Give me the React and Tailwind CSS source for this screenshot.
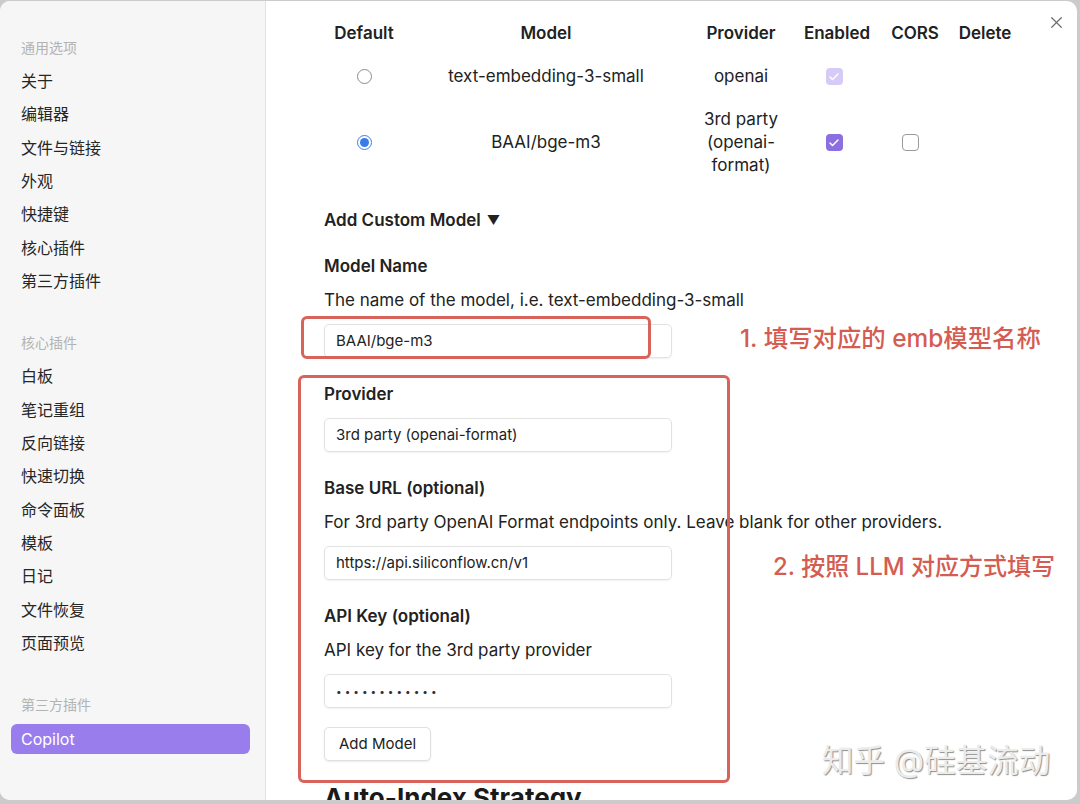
import { X, Check } from 'lucide-react';

const general = ['关于', '编辑器', '文件与链接', '外观', '快捷键', '核心插件', '第三方插件'];
const corePlugins = ['白板', '笔记重组', '反向链接', '快速切换', '命令面板', '模板', '日记', '文件恢复', '页面预览'];

function SideHeading({ children, className = '' }) {
	return <div className={`h-[20px] leading-[20px] px-[10px] text-[14px] text-[#b3b3b3] ${className}`}>{children}</div>;
}

function SideItem({ label }) {
	return <div className="h-[33.33px] leading-[33.33px] px-[10px] text-[16px] text-[#262626]">{label}</div>;
}

function Box({ checked, disabled }) {
	if (!checked) {
		return <span className="inline-block w-[17px] h-[17px] rounded-[4px] border border-[#9a9a9a] bg-white" />;
	}
	return (
		<span
			className={`inline-flex items-center justify-center w-[17px] h-[17px] rounded-[4px] ${
				disabled ? 'bg-[#d5cbf6]' : 'bg-[#8b6fe0]'
			}`}
		>
			<Check size={12} strokeWidth={3} className="text-white" />
		</span>
	);
}

function Radio({ on }) {
	if (on) {
		return (
			<span className="inline-flex items-center justify-center w-[15px] h-[15px] rounded-full border border-[#3f7fe6] bg-white">
				<span className="w-[9px] h-[9px] rounded-full bg-[#3b7be8]" />
			</span>
		);
	}
	return <span className="inline-block w-[15px] h-[15px] rounded-full border border-[#8c8c8c] bg-white" />;
}

function Field({ label, desc, value, first }) {
	return (
		<div className={first ? '' : 'mt-[24px]'}>
			{label && <div className="h-[24px] leading-[24px] text-[17px] font-semibold text-[#222]">{label}</div>}
			{desc && <div className="mt-[10px] h-[24px] leading-[24px] text-[17px] text-[#222] whitespace-nowrap">{desc}</div>}
			<div className="mt-[12px] w-[348px] h-[34px] flex items-center px-[11px] rounded-[5px] border border-[#e2e2e2] shadow-[0_1px_2px_rgba(0,0,0,0.06)] text-[15px] text-[#222]">
				{value}
			</div>
		</div>
	);
}

export default function App() {
	return (
		<div className="w-[1080px] h-[804px] bg-[#cbcbcb] pt-[1px] overflow-hidden font-['Inter','Noto_Sans_CJK_SC',sans-serif]">
			<div className="relative w-[1077px] h-[799px] rounded-[10px] overflow-hidden bg-white flex">
				{/* sidebar */}
				<div className="w-[266px] shrink-0 h-full bg-[#f6f6f6] border-r border-[#e2e2e2] pl-[11px] pr-[15px] pt-[37px]">
					<SideHeading>通用选项</SideHeading>
					<div className="mt-[7px]">
						{general.map((g) => (
							<SideItem key={g} label={g} />
						))}
					</div>
					<SideHeading className="mt-[35px]">核心插件</SideHeading>
					<div className="mt-[7px]">
						{corePlugins.map((g) => (
							<SideItem key={g} label={g} />
						))}
					</div>
					<SideHeading className="mt-[35px]">第三方插件</SideHeading>
					<div className="mt-[9px] h-[30px] leading-[30px] px-[10px] rounded-[6px] bg-[#9a7ded] text-white text-[16px]">
						Copilot
					</div>
				</div>

				{/* content */}
				<div className="flex-1 h-full overflow-hidden pl-[58px] pt-[20px]">
					<div className="ml-[-6px] grid grid-cols-[92px_272px_118px_74px_82px_58px] text-center text-[17px] text-[#222]">
						<div className="h-[24px] leading-[24px] font-semibold">Default</div>
						<div className="h-[24px] leading-[24px] font-semibold">Model</div>
						<div className="h-[24px] leading-[24px] font-semibold">Provider</div>
						<div className="h-[24px] leading-[24px] font-semibold whitespace-nowrap">Enabled</div>
						<div className="h-[24px] leading-[24px] font-semibold">CORS</div>
						<div className="h-[24px] leading-[24px] font-semibold">Delete</div>

						<div className="h-[63px] flex items-center justify-center">
							<Radio />
						</div>
						<div className="h-[63px] flex items-center justify-center">text-embedding-3-small</div>
						<div className="h-[63px] flex items-center justify-center">openai</div>
						<div className="h-[63px] flex items-center justify-center pr-[6px]">
							<Box checked disabled />
						</div>
						<div className="h-[63px]" />
						<div className="h-[63px]" />

						<div className="h-[69px] flex items-center justify-center">
							<Radio on />
						</div>
						<div className="h-[69px] flex items-center justify-center">BAAI/bge-m3</div>
						<div className="h-[69px] flex items-center justify-center px-[12px] leading-[23px]">3rd party (openai-format)</div>
						<div className="h-[69px] flex items-center justify-center pr-[6px]">
							<Box checked />
						</div>
						<div className="h-[69px] flex items-center justify-center pr-[10px]">
							<Box />
						</div>
						<div className="h-[69px]" />
					</div>

					<div className="mt-[31px] h-[24px] leading-[24px] text-[17px] font-semibold text-[#222] flex items-center gap-[6px]">
						Add Custom Model <span className="text-[13px]">▼</span>
					</div>

					<div className="mt-[22px]">
						<Field first label="Model Name" desc="The name of the model, i.e. text-embedding-3-small" value="BAAI/bge-m3" />
						<div className="mt-[24px]">
							<div className="h-[24px] leading-[24px] text-[17px] font-semibold text-[#222]">Provider</div>
							<div className="mt-[12px] w-[348px] h-[34px] flex items-center px-[11px] rounded-[5px] border border-[#e2e2e2] shadow-[0_1px_2px_rgba(0,0,0,0.06)] text-[15px] text-[#222]">
								3rd party (openai-format)
							</div>
						</div>
						<Field
							label="Base URL (optional)"
							desc="For 3rd party OpenAI Format endpoints only. Leave blank for other providers."
							value="https://api.siliconflow.cn/v1"
						/>
						<Field
							label="API Key (optional)"
							desc="API key for the 3rd party provider"
							value={<span className="tracking-[3px] text-[10px] text-[#333]">••••••••••••</span>}
						/>
					</div>

					<button className="mt-[19px] h-[34px] px-[14px] rounded-[5px] border border-[#e0e0e0] bg-white shadow-[0_1px_2px_rgba(0,0,0,0.08)] text-[15px] text-[#222]">
						Add Model
					</button>

					<div className="mt-[20px] h-[34px] leading-[34px] text-[26px] font-bold text-[#1a1a1a] whitespace-nowrap">
						Auto-Index Strategy
					</div>
				</div>

				{/* close */}
				<X size={19} strokeWidth={1.6} className="absolute left-[1047px] top-[12px] text-[#6f6f6f]" />

				{/* annotations */}
				<div className="absolute left-[301px] top-[315px] w-[350px] h-[43px] rounded-[6px] border-[3px] border-[#d8635a]" />
				<div className="absolute left-[298px] top-[374px] w-[432px] h-[408px] rounded-[6px] border-[3px] border-[#d8635a]" />
				<div className="absolute left-[740px] top-[322px] h-[30px] leading-[30px] text-[24.4px] font-medium text-[#d45c52] whitespace-nowrap">
					1. 填写对应的 emb模型名称
				</div>
				<div className="absolute left-[773px] top-[551px] h-[30px] leading-[30px] text-[24px] font-medium text-[#d45c52] whitespace-nowrap">
					2. 按照 LLM 对应方式填写
				</div>
				<div className="absolute left-[822px] top-[742px] h-[36px] leading-[36px] text-[31.5px] text-[#ececec] whitespace-nowrap [text-shadow:1px_1px_1px_#8f8f8f]">
					知乎 @硅基流动
				</div>
			</div>
		</div>
	);
}
